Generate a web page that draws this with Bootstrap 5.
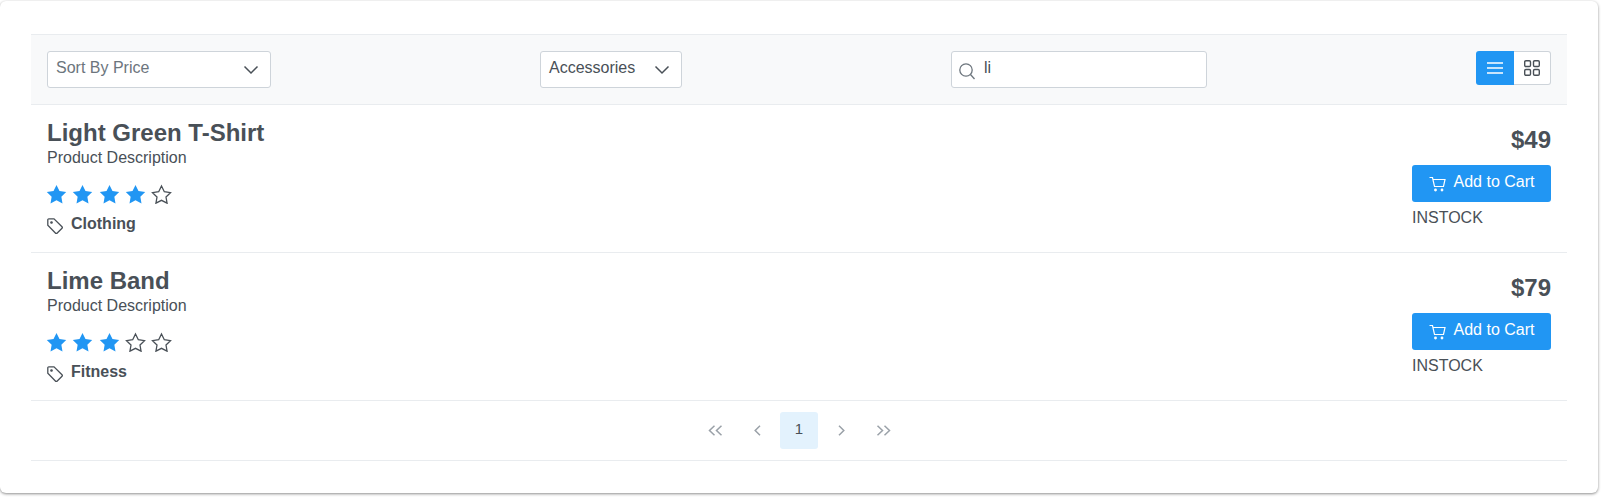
<!DOCTYPE html>
<html lang="en"><head><meta charset="utf-8"><title>Products</title>
<link href="https://cdn.jsdelivr.net/npm/bootstrap@5.3.0/dist/css/bootstrap.min.css" rel="stylesheet">
<style>
html,body{height:500px;overflow:hidden}
body{background:#fff;font-family:"Liberation Sans",Arial,sans-serif;font-size:16px;color:#495057;padding:1px 9px 0 0}
.shell{height:492px;padding:33px 31px 0;background:#fff;border-radius:6px;box-shadow:0 1px 3px rgba(0,0,0,.45)}
.bar{height:71px;background:#f8f9fa;border-top:1px solid #e9ecef;border-bottom:1px solid #e9ecef;padding:16px 16px 0}
.fld{height:37px;background:#fff;border:1px solid #ced4da;border-radius:3px;position:relative;line-height:31px;padding-left:8px;font-size:16px;color:#495057}
.fld-sort{width:224px;color:#6c757d}
.fld-cat{width:142px}
.fld-search{width:256px;padding-left:32px}
.fld svg{position:absolute}
.chev{top:13px;right:11px}
.mag{left:6px;top:9px}
.views{height:34px;width:75px;display:flex}
.vw{display:flex;align-items:center;justify-content:center}
.vw-on{width:38px;background:#2196f3;border-radius:3px 0 0 3px}
.vw-off{width:37px;background:#fff;border:1px solid #ced4da;border-left:0;border-radius:0 3px 3px 0}
.prod{height:148px;border-bottom:1px solid #e9ecef;padding:16px 16px 0;display:flex;justify-content:space-between}
.prod-name{font-size:24px;font-weight:700;line-height:24px;margin:0 0 3px;color:#495057}
.prod-desc{line-height:20px;margin-bottom:16px}
.stars{display:flex;gap:5.25px;height:20px;margin:0 0 10px -1px}
.tagline{display:flex;gap:8px;font-weight:700;line-height:20px;color:#495057}
.tagline svg{margin-top:4px}
.buy{width:139px;padding-top:5px}
.price{font-size:24px;font-weight:700;text-align:right;line-height:28px;margin-bottom:11px}
.cart{width:139px;height:37px;padding:0;background:#2196f3;border:0;border-radius:3px;color:#fff;font-size:16px;display:flex;align-items:center;justify-content:center;gap:8px;line-height:32px}
.cart span{margin-bottom:3px}
.stock{margin-top:6px;line-height:20px;font-size:16px}
.pager{height:60px;border-bottom:1px solid #e9ecef;display:flex;align-items:center;justify-content:center;gap:4px}
.pg{width:38px;height:37px;display:flex;align-items:center;justify-content:center;border-radius:3px}
.pg-on{background:#e3f2fd;color:#495057;padding-bottom:3px;font-size:15px}
</style></head>
<body>
<div class="shell">
 <div class="bar d-flex justify-content-between align-items-start">
  <div class="fld fld-sort">Sort By Price<svg class="chev" width="16" height="10" viewBox="0 0 16 10"><path d="M1.5 1.5 8 8l6.500-6.500" fill="none" stroke="#495057" stroke-width="1.500"/></svg></div>
  <div class="fld fld-cat">Accessories<svg class="chev" width="16" height="10" viewBox="0 0 16 10"><path d="M1.500 1.500 8 8l6.500-6.500" fill="none" stroke="#495057" stroke-width="1.500"/></svg></div>
  <div class="fld fld-search">li<svg class="mag" width="18" height="20" viewBox="0 0 18 20"><circle cx="8" cy="9" r="6.200" fill="none" stroke="#6c757d" stroke-width="1.300"/><path d="m12.500 13.500 4 4.500" stroke="#6c757d" stroke-width="1.300"/></svg></div>
  <div class="views">
   <div class="vw vw-on"><svg width="16" height="12" viewBox="0 0 16 12"><path d="M0 1h16M0 6h16M0 11h16" stroke="#fff" stroke-width="1.500"/></svg></div>
   <div class="vw vw-off"><svg width="16" height="16" viewBox="0 0 16 16" fill="none" stroke="#495057" stroke-width="1.400"><rect x=".7" y=".7" width="5.800" height="5.800" rx="1.200"/><rect x="9.500" y=".7" width="5.800" height="5.800" rx="1.200"/><rect x=".7" y="9.500" width="5.800" height="5.800" rx="1.200"/><rect x="9.500" y="9.500" width="5.800" height="5.800" rx="1.200"/></svg></div>
  </div>
 </div>

 <div class="prod">
  <div>
   <h5 class="prod-name">Light Green T-Shirt</h5>
   <div class="prod-desc">Product Description</div>
   <div class="stars">
    <svg width="21" height="20" viewBox="0 0 21 20"><path d="m10.500 1 3 6.100 6.700 1-4.850 4.700 1.150 6.700-6-3.150-6 3.150 1.150-6.700L.8 8.100l6.700-1z" fill="#2196f3"/></svg>
    <svg width="21" height="20" viewBox="0 0 21 20"><path d="m10.500 1 3 6.100 6.700 1-4.850 4.700 1.150 6.700-6-3.150-6 3.150 1.150-6.700L.8 8.100l6.700-1z" fill="#2196f3"/></svg>
    <svg width="21" height="20" viewBox="0 0 21 20"><path d="m10.500 1 3 6.100 6.700 1-4.850 4.700 1.150 6.700-6-3.150-6 3.150 1.150-6.700L.8 8.100l6.700-1z" fill="#2196f3"/></svg>
    <svg width="21" height="20" viewBox="0 0 21 20"><path d="m10.500 1 3 6.100 6.700 1-4.850 4.700 1.150 6.700-6-3.150-6 3.150 1.150-6.700L.8 8.100l6.700-1z" fill="#2196f3"/></svg>
    <svg width="21" height="20" viewBox="0 0 21 20"><path d="m10.500 2 2.800 5.700 6.200.9-4.500 4.400 1.060 6.200-5.560-2.900-5.560 2.900 1.060-6.200-4.500-4.400 6.200-.9z" fill="none" stroke="#495057" stroke-width="1.300"/></svg>
   </div>
   <div class="tagline"><svg width="16" height="16" viewBox="0 0 16 16" fill="none" stroke="#495057" stroke-width="1.300"><path d="M.8 1.800a1 1 0 0 1 1-1h5.200l8 8a1 1 0 0 1 0 1.400l-5 5a1 1 0 0 1-1.400 0l-7.800-8z"/><circle cx="4.500" cy="4.500" r=".7" fill="#495057"/></svg><span>Clothing</span></div>
  </div>
  <div class="buy">
   <div class="price">$49</div>
   <button class="btn cart" type="button"><svg width="17" height="16" viewBox="0 0 17 16" fill="none" stroke="#fff" stroke-width="1.200"><path d="M.5 1.500h3l2 9h9l1.500-7H4"/><circle cx="6.500" cy="14" r=".8" fill="#fff"/><circle cx="13" cy="14" r=".8" fill="#fff"/></svg><span>Add to Cart</span></button>
   <div class="stock">INSTOCK</div>
  </div>
 </div>

 <div class="prod">
  <div>
   <h5 class="prod-name">Lime Band</h5>
   <div class="prod-desc">Product Description</div>
   <div class="stars">
    <svg width="21" height="20" viewBox="0 0 21 20"><path d="m10.500 1 3 6.100 6.700 1-4.850 4.700 1.150 6.700-6-3.150-6 3.150 1.150-6.700L.8 8.100l6.700-1z" fill="#2196f3"/></svg>
    <svg width="21" height="20" viewBox="0 0 21 20"><path d="m10.500 1 3 6.100 6.700 1-4.850 4.700 1.150 6.700-6-3.150-6 3.150 1.150-6.700L.8 8.100l6.700-1z" fill="#2196f3"/></svg>
    <svg width="21" height="20" viewBox="0 0 21 20"><path d="m10.500 1 3 6.100 6.700 1-4.850 4.700 1.150 6.700-6-3.150-6 3.150 1.150-6.700L.8 8.100l6.700-1z" fill="#2196f3"/></svg>
    <svg width="21" height="20" viewBox="0 0 21 20"><path d="m10.500 2 2.800 5.700 6.200.9-4.500 4.400 1.060 6.200-5.560-2.900-5.560 2.900 1.060-6.200-4.500-4.400 6.200-.9z" fill="none" stroke="#495057" stroke-width="1.300"/></svg>
    <svg width="21" height="20" viewBox="0 0 21 20"><path d="m10.500 2 2.800 5.700 6.200.9-4.500 4.400 1.060 6.200-5.560-2.900-5.560 2.900 1.060-6.200-4.500-4.400 6.200-.9z" fill="none" stroke="#495057" stroke-width="1.300"/></svg>
   </div>
   <div class="tagline"><svg width="16" height="16" viewBox="0 0 16 16" fill="none" stroke="#495057" stroke-width="1.300"><path d="M.8 1.800a1 1 0 0 1 1-1h5.200l8 8a1 1 0 0 1 0 1.400l-5 5a1 1 0 0 1-1.400 0l-7.800-8z"/><circle cx="4.500" cy="4.500" r=".7" fill="#495057"/></svg><span>Fitness</span></div>
  </div>
  <div class="buy">
   <div class="price">$79</div>
   <button class="btn cart" type="button"><svg width="17" height="16" viewBox="0 0 17 16" fill="none" stroke="#fff" stroke-width="1.200"><path d="M.5 1.500h3l2 9h9l1.500-7H4"/><circle cx="6.500" cy="14" r=".8" fill="#fff"/><circle cx="13" cy="14" r=".8" fill="#fff"/></svg><span>Add to Cart</span></button>
   <div class="stock">INSTOCK</div>
  </div>
 </div>

 <div class="pager">
  <div class="pg"><svg width="15" height="11" viewBox="0 0 15 11" fill="none" stroke="#9aa1a8" stroke-width="1.500"><path d="M6.500.8 1.500 5.500l5 4.700M13.500.8l-5 4.700 5 4.700"/></svg></div>
  <div class="pg"><svg width="7" height="11" viewBox="0 0 7 11" fill="none" stroke="#9aa1a8" stroke-width="1.500"><path d="M6 .8 1.200 5.500 6 10.200"/></svg></div>
  <div class="pg pg-on">1</div>
  <div class="pg"><svg width="7" height="11" viewBox="0 0 7 11" fill="none" stroke="#9aa1a8" stroke-width="1.500"><path d="M1 .8l4.800 4.700L1 10.200"/></svg></div>
  <div class="pg"><svg width="15" height="11" viewBox="0 0 15 11" fill="none" stroke="#9aa1a8" stroke-width="1.500"><path d="m1.500.8 5 4.700-5 4.700M8.500.8l5 4.700-5 4.700"/></svg></div>
 </div>
</div>
</body></html>
